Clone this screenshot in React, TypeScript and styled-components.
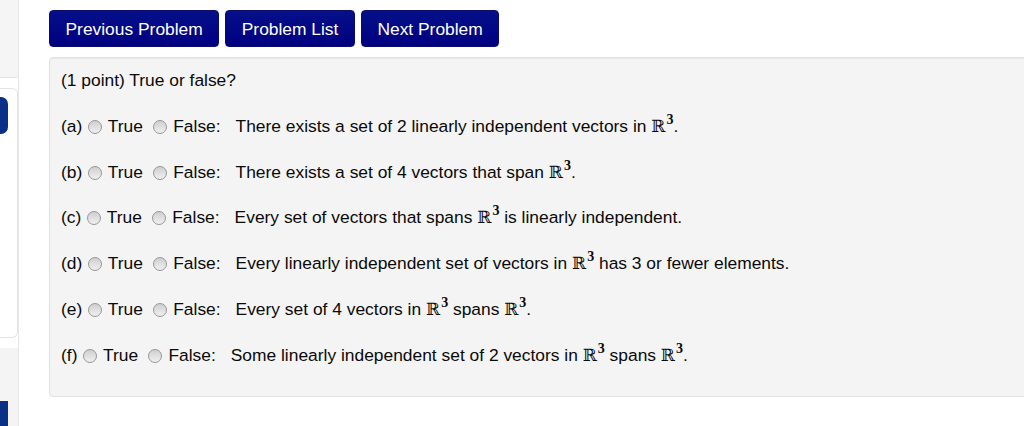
import styled, { createGlobalStyle } from 'styled-components';

const GlobalStyle = createGlobalStyle`
  html, body {
    margin: 0;
    padding: 0;
    background: #ffffff;
    overflow: hidden;
  }
  body {
    font-family: "Liberation Sans", Arial, sans-serif;
    font-size: 17.4px;
    color: #0a0a0a;
  }
`;

const Page = styled.div`
  display: flex;
  gap: 30px;
  width: 1100px;
  height: 426px;
  overflow: hidden;
`;

const Sidebar = styled.div`
  display: flex;
  flex-direction: column;
  width: 19px;
  flex-shrink: 0;
  border-right: 1px solid #e6e6e6;
  box-sizing: border-box;
  overflow: hidden;
`;

const SideTop = styled.div`
  flex-shrink: 0;
  height: 78px;
  background: #f5f5f5;
  border-bottom: 1px solid #e3e3e3;
  border-bottom-right-radius: 2px;
  box-sizing: border-box;
`;

const SideNav = styled.div`
  flex-shrink: 0;
  margin-top: 10px;
  height: 250px;
  background: #fff;
  border: 1px solid #e3e3e3;
  border-left: none;
  border-radius: 0 6px 6px 0;
  padding-top: 8px;
  box-sizing: border-box;
`;

const SideBottom = styled.div`
  flex: 1;
  margin-top: 10px;
  background: #f4f4f4;
  padding-top: 53px;
`;

const NavPill = styled.div<{ $height: number; $round?: boolean }>`
  width: 8px;
  height: ${p => p.$height}px;
  background: #0a2f86;
  border-radius: ${p => (p.$round ? '0 7px 7px 0' : '0')};
`;

const Main = styled.div`
  flex: 1;
  display: flex;
  flex-direction: column;
  padding-top: 10px;
`;

const Toolbar = styled.div`
  display: flex;
  gap: 6px;
`;

const NavButton = styled.button`
  height: 37px;
  padding: 0 15.5px;
  border: 1px solid #0b0b6e;
  border-radius: 4px;
  background: linear-gradient(to bottom, #05108a, #000080);
  color: #fff;
  font-family: "Liberation Sans", Arial, sans-serif;
  font-size: 17.4px;
  line-height: 20px;
  cursor: pointer;
`;

const Well = styled.div`
  margin-top: 10px;
  height: 340px;
  box-sizing: border-box;
  background: #f4f4f4;
  border: 1px solid #e1e1e1;
  border-radius: 4px;
  box-shadow: inset 0 1px 1px rgba(0, 0, 0, 0.05);
  padding: 9px 11px;
  display: flex;
  flex-direction: column;
  gap: 19.8px;
`;

const Line = styled.div`
  height: 26px;
  line-height: 26px;
  white-space: nowrap;
`;

const Radio = styled.span`
  display: inline-block;
  width: 14px;
  height: 14px;
  box-sizing: border-box;
  border-radius: 50%;
  border: 1px solid #979797;
  background: linear-gradient(to bottom, #cfcfcf, #f0f0f0);
  vertical-align: -2px;
  margin: 0 6px 0 5.5px;
`;

const Statement = styled.span`
  margin-left: 15px;
`;

const Math = styled.span`
  line-height: 0;
`;

const Bb = styled.span`
  font-family: "DejaVu Serif", "Liberation Serif", serif;
  font-size: 17px;
  line-height: 0;
`;

const Sup = styled.span`
  font-family: "Liberation Serif", "DejaVu Serif", serif;
  font-weight: bold;
  font-size: 14px;
  line-height: 0;
  position: relative;
  top: -8px;
  margin-left: 1px;
`;

const R3 = () => (
  <Math>
    <Bb>ℝ</Bb>
    <Sup>3</Sup>
  </Math>
);

const items: { label: string; text: React.ReactNode }[] = [
  { label: 'a', text: <>There exists a set of 2 linearly independent vectors in <R3 />.</> },
  { label: 'b', text: <>There exists a set of 4 vectors that span <R3 />.</> },
  { label: 'c', text: <>Every set of vectors that spans <R3 /> is linearly independent.</> },
  { label: 'd', text: <>Every linearly independent set of vectors in <R3 /> has 3 or fewer elements.</> },
  { label: 'e', text: <>Every set of 4 vectors in <R3 /> spans <R3 />.</> },
  { label: 'f', text: <>Some linearly independent set of 2 vectors in <R3 /> spans <R3 />.</> },
];

export default function App() {
  return (
    <>
      <GlobalStyle />
      <Page>
        <Sidebar>
          <SideTop />
          <SideNav>
            <NavPill $height={37} $round />
          </SideNav>
          <SideBottom>
            <NavPill $height={40} />
          </SideBottom>
        </Sidebar>
        <Main>
          <Toolbar>
            <NavButton>Previous Problem</NavButton>
            <NavButton>Problem List</NavButton>
            <NavButton>Next Problem</NavButton>
          </Toolbar>
          <Well>
            <Line>(1 point) True or false?</Line>
            {items.map(item => (
              <Line key={item.label}>
                ({item.label})<Radio />True <Radio />False:
                <Statement>{item.text}</Statement>
              </Line>
            ))}
          </Well>
        </Main>
      </Page>
    </>
  );
}
